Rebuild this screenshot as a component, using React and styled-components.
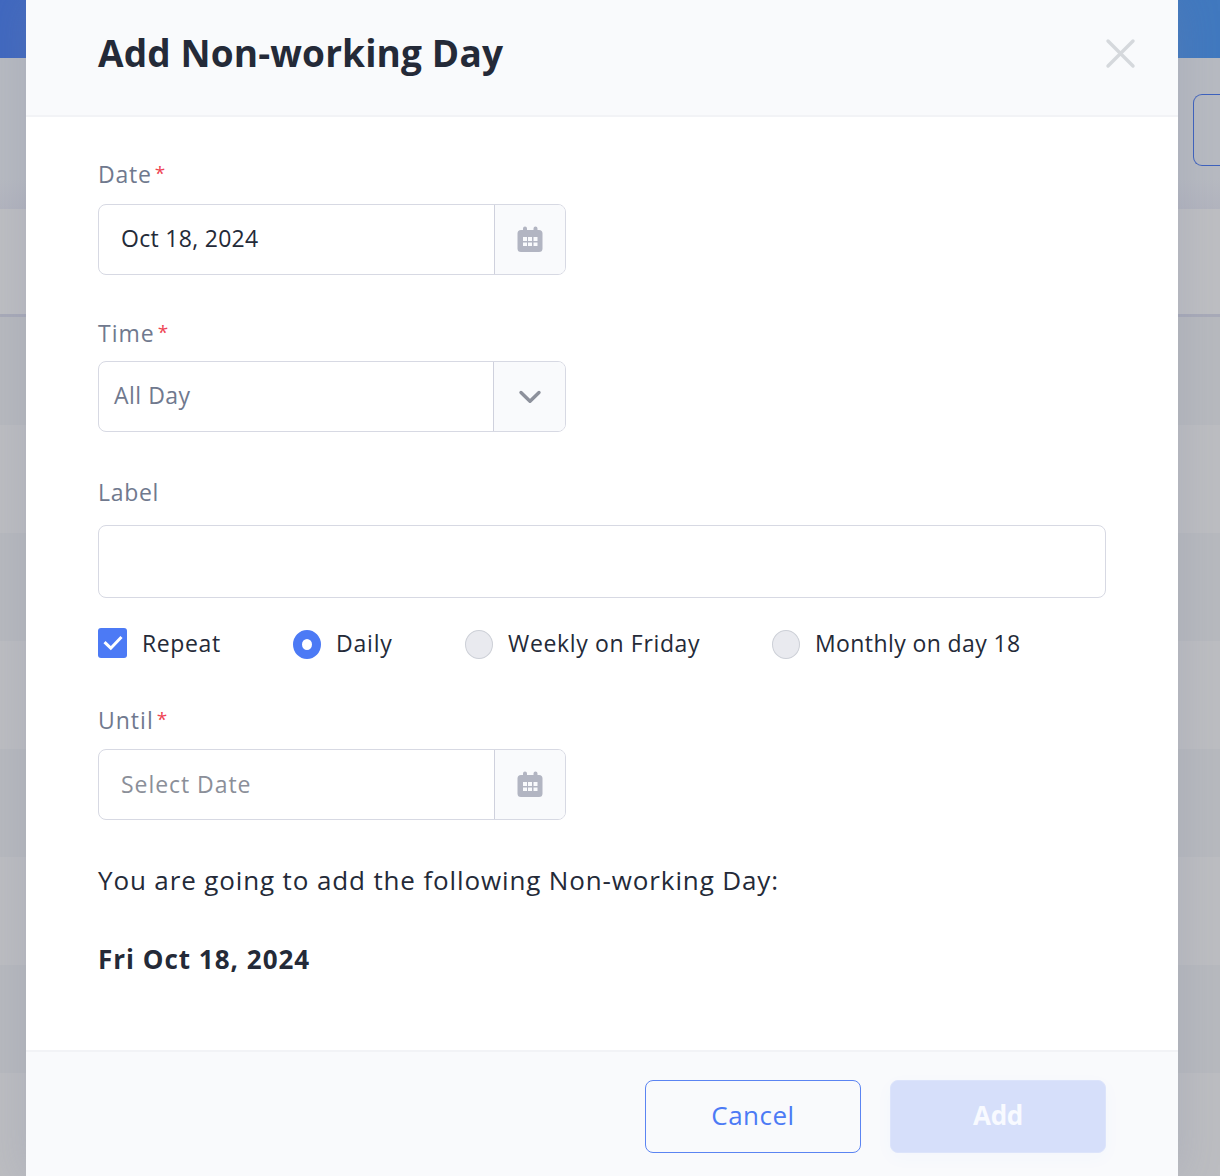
import React from "react";
import styled, { createGlobalStyle } from "styled-components";

const Global = createGlobalStyle`
  * { box-sizing: border-box; }
  body { margin: 0; background: #bbbcc1; overflow: hidden; font-family: "Open Sans", Roboto, sans-serif; color: #242a38; }
`;

const Screen = styled.div`
  display: grid;
  grid-template: 1176px / 1220px;
  overflow: hidden;
  & > * { grid-area: 1 / 1; }
`;

const Page = styled.div`
  display: flex;
  flex-direction: column;
  & > * { flex: none; }
`;
const TopBar = styled.div`
  height: 58px;
  background: linear-gradient(90deg, #4068bf, #4179bf);
`;
const Toolbar = styled.div`
  height: 151px;
  display: flex;
  justify-content: flex-end;
  align-items: flex-start;
  padding-top: 36px;
  background: linear-gradient(#b7bac1 0 120px, #b2b4be 151px);
`;
const ToolbarButton = styled.div`
  width: 27px;
  height: 72px;
  border: 1px solid #3d61bd;
  border-right: 0;
  border-radius: 9px 0 0 9px;
`;
const TableHead = styled.div`
  height: 108px;
  background: #bdbec2;
  border-bottom: 3px solid #a8aab8;
`;
const TableRow = styled.div`
  height: 108px;
  background: ${(p) => (p.$striped ? "#b7b9be" : "#bcbdc1")};
`;

const Modal = styled.section`
  width: 1152px;
  margin-left: 26px;
  display: flex;
  flex-direction: column;
  background: #fff;
  box-shadow: 0 0 40px rgba(120, 130, 165, 0.24);
  z-index: 1;
`;
const Header = styled.header`
  height: 117px;
  display: flex;
  align-items: center;
  justify-content: space-between;
  padding: 0 42px 10px 72px;
  background: #f9fafc;
  border-bottom: 2px solid #f2f3f6;
`;
const Title = styled.h1`
  margin: 0;
  font-size: 37px;
  line-height: 44px;
  font-weight: 700;
  letter-spacing: 0.14px;
`;
const CloseButton = styled.button`
  display: flex;
  padding: 1px 0 0;
  border: 0;
  background: none;
`;
const Body = styled.form`
  flex: 1;
  display: flex;
  flex-direction: column;
  padding: 43px 72px 0;
`;
const Field = styled.div`
  display: flex;
  flex-direction: column;
  width: ${(p) => (p.$wide ? "100%" : "468px")};
  margin-bottom: ${(p) => p.$after}px;
`;
const Label = styled.label`
  display: flex;
  font-size: 23px;
  line-height: 28px;
  margin-bottom: ${(p) => p.$gap}px;
  letter-spacing: ${(p) => p.$spacing}px;
  color: #70798e;
`;
const Required = styled.span`
  margin-left: 3px;
  font-size: 19px;
  line-height: 26px;
  letter-spacing: 0;
  color: #ee4453;
`;
const Control = styled.div`
  display: flex;
  height: ${(p) => p.$height}px;
  border: 1px solid #d7d9e3;
  border-radius: 8px;
  overflow: hidden;
`;
const Value = styled.div`
  flex: 1;
  display: flex;
  align-items: center;
  padding: 0 0 ${(p) => p.$lift}px ${(p) => p.$inset}px;
  font-size: 23px;
  letter-spacing: ${(p) => p.$spacing}px;
  color: ${(p) => p.$color};
`;
const Addon = styled.div`
  width: ${(p) => p.$width}px;
  display: flex;
  align-items: center;
  justify-content: center;
  background: #f9fafc;
  border-left: 1px solid #cfd1dd;
`;
const Options = styled.div`
  display: grid;
  grid-template-columns: 195px 172px 307px auto;
  height: 34px;
  margin-bottom: 45px;
`;
const Option = styled.label`
  display: flex;
  align-items: center;
  gap: 15px;
  font-size: 23px;
  line-height: 32px;
  letter-spacing: ${(p) => p.$spacing}px;
  white-space: nowrap;
`;
const OptionText = styled.span`
  padding-bottom: 2px;
`;
const Checkbox = styled.span`
  width: 29px;
  height: 30px;
  margin-top: -2px;
  display: grid;
  place-items: center;
  border-radius: 3px;
  background: #4c7af5;
`;
const Radio = styled.span`
  width: 28px;
  height: 29px;
  margin-top: 1px;
  border-radius: 50%;
  background: ${(p) => (p.$checked ? "#fff" : "#e9eaef")};
  border: ${(p) => (p.$checked ? "9px solid #4c7af5" : "1px solid #cdd0d7")};
`;
const Summary = styled.p`
  margin: 0 0 ${(p) => p.$after}px;
  font-size: 26px;
  line-height: 34px;
  font-weight: ${(p) => (p.$bold ? 700 : 400)};
  letter-spacing: ${(p) => p.$spacing}px;
  white-space: nowrap;
`;
const Footer = styled.footer`
  height: 126px;
  display: flex;
  justify-content: flex-end;
  align-items: flex-start;
  gap: 29px;
  padding: 28px 72px 0;
  background: #f9fafc;
  border-top: 2px solid #f2f3f6;
`;
const Button = styled.button`
  width: 216px;
  height: 73px;
  padding: 0 0 4px;
  border-radius: 8px;
  font-family: inherit;
  font-size: 26px;
  letter-spacing: ${(p) => (p.$primary ? -0.3 : 0.5)}px;
  font-weight: ${(p) => (p.$primary ? 700 : 400)};
  color: ${(p) => (p.$primary ? "#f8faff" : "#4c7af5")};
  background: ${(p) => (p.$primary ? "#d6dffa" : "transparent")};
  border: 1px solid ${(p) => (p.$primary ? "#dce4fb" : "#5b84f2")};
  box-shadow: ${(p) => (p.$primary ? "0 5px 18px rgba(76, 122, 245, 0.03)" : "none")};
`;

const CalendarIcon = () => (
  <svg width="26" height="27" viewBox="0 0 26 27">
    <path
      fill="#b2b5c2"
      fillRule="evenodd"
      d="M4 4h2V2.500a2 2 0 0 1 4 0V4h6.500V2.500a2 2 0 0 1 4 0V4H22a3.500 3.500 0 0 1 3.500 3.500V22.500A3.500 3.500 0 0 1 22 26H4A3.500 3.500 0 0 1 .500 22.500V7.500A3.500 3.500 0 0 1 4 4ZM6 11v4h4v-4ZM11 11v4h4v-4ZM16.500 11v4h4v-4ZM6 16.500v3.500h4v-3.500ZM11 16.500v3.500h4v-3.500ZM16.500 16.500v3.500h4v-3.500Z"
    />
  </svg>
);
const ChevronIcon = () => (
  <svg width="24" height="16" viewBox="0 0 24 16" fill="none">
    <path d="m3 3.500 9 8.800 9-8.800" stroke="#8d919c" strokeWidth="3.400" strokeLinecap="round" strokeLinejoin="round" />
  </svg>
);

const DateField = ({ label, spacing, value, color, valueSpacing, lift, gap, after }) => (
  <Field $after={after}>
    <Label $gap={gap} $spacing={spacing}>
      {label}
      <Required>*</Required>
    </Label>
    <Control $height={71}>
      <Value $inset={22} $lift={lift} $color={color} $spacing={valueSpacing}>{value}</Value>
      <Addon $width={71}><CalendarIcon /></Addon>
    </Control>
  </Field>
);

const rows = [true, false, true, false, true, false, true, false];

export default function App() {
  return (
    <>
      <Global />
      <Screen>
        <Page>
          <TopBar />
          <Toolbar><ToolbarButton /></Toolbar>
          <TableHead />
          {rows.map((striped, i) => <TableRow key={i} $striped={striped} />)}
        </Page>
        <Modal>
          <Header>
            <Title>Add Non-working Day</Title>
            <CloseButton aria-label="Close">
              <svg width="31" height="31" viewBox="0 0 31 31" fill="none">
                <path d="m3 3 25 25M28 3 3 28" stroke="#d5d8dc" strokeWidth="3.400" strokeLinecap="round" />
              </svg>
            </CloseButton>
          </Header>
          <Body>
            <DateField label="Date" spacing={0.8} value="Oct 18, 2024" color="#242a38" valueSpacing={0.3} lift={3} gap={16} after={44} />
            <Field $after={46}>
              <Label $gap={14} $spacing={1}>
                Time
                <Required>*</Required>
              </Label>
              <Control $height={71}>
                <Value $inset={15} $lift={3} $color="#70798e" $spacing={0.5}>All Day</Value>
                <Addon $width={72}><ChevronIcon /></Addon>
              </Control>
            </Field>
            <Field $wide $after={29}>
              <Label $gap={19} $spacing={0.7}>Label</Label>
              <Control $height={73} />
            </Field>
            <Options>
              <Option $spacing={0.6}>
                <Checkbox>
                  <svg width="20" height="16" viewBox="0 0 20 16" fill="none">
                    <path d="m1.500 7.200 6.300 6L18.500 2" stroke="#fff" strokeWidth="3" />
                  </svg>
                </Checkbox>
                <OptionText>Repeat</OptionText>
              </Option>
              <Option $spacing={0.8}><Radio $checked /><OptionText>Daily</OptionText></Option>
              <Option $spacing={0.65}><Radio /><OptionText>Weekly on Friday</OptionText></Option>
              <Option $spacing={0.4}><Radio /><OptionText>Monthly on day 18</OptionText></Option>
            </Options>
            <DateField label="Until" spacing={1} value="Select Date" color="#8b8f99" valueSpacing={0.95} lift={1} gap={15} after={43} />
            <Summary $spacing={0.87} $after={45}>You are going to add the following Non-working Day:</Summary>
            <Summary $bold $spacing={1} $after={0}>Fri Oct 18, 2024</Summary>
          </Body>
          <Footer>
            <Button type="button">Cancel</Button>
            <Button type="button" $primary>Add</Button>
          </Footer>
        </Modal>
      </Screen>
    </>
  );
}
